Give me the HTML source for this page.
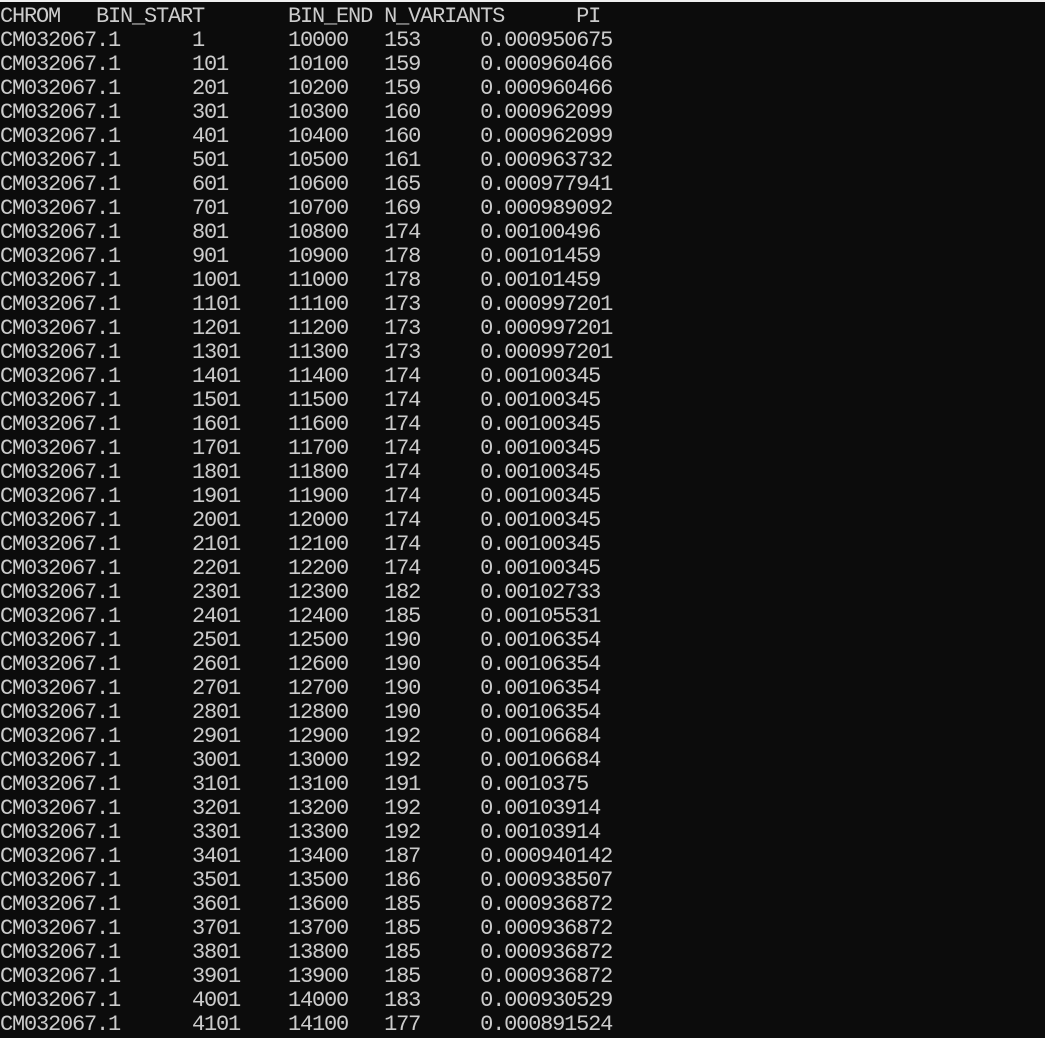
<!DOCTYPE html>
<html><head><meta charset="utf-8"><style>
html,body{margin:0;padding:0;background:#0c0c0c;width:1045px;height:1038px;overflow:hidden}
.top{height:2px;background:#f0f0f0}
pre{margin:0;padding:3px 0 0 0;font-family:"Liberation Mono",monospace;font-size:22px;letter-spacing:-1.2px;line-height:24px;color:#cccccc;white-space:pre}
</style></head><body><div class="top"></div><pre>CHROM   BIN_START       BIN_END N_VARIANTS      PI
CM032067.1      1       10000   153     0.000950675
CM032067.1      101     10100   159     0.000960466
CM032067.1      201     10200   159     0.000960466
CM032067.1      301     10300   160     0.000962099
CM032067.1      401     10400   160     0.000962099
CM032067.1      501     10500   161     0.000963732
CM032067.1      601     10600   165     0.000977941
CM032067.1      701     10700   169     0.000989092
CM032067.1      801     10800   174     0.00100496
CM032067.1      901     10900   178     0.00101459
CM032067.1      1001    11000   178     0.00101459
CM032067.1      1101    11100   173     0.000997201
CM032067.1      1201    11200   173     0.000997201
CM032067.1      1301    11300   173     0.000997201
CM032067.1      1401    11400   174     0.00100345
CM032067.1      1501    11500   174     0.00100345
CM032067.1      1601    11600   174     0.00100345
CM032067.1      1701    11700   174     0.00100345
CM032067.1      1801    11800   174     0.00100345
CM032067.1      1901    11900   174     0.00100345
CM032067.1      2001    12000   174     0.00100345
CM032067.1      2101    12100   174     0.00100345
CM032067.1      2201    12200   174     0.00100345
CM032067.1      2301    12300   182     0.00102733
CM032067.1      2401    12400   185     0.00105531
CM032067.1      2501    12500   190     0.00106354
CM032067.1      2601    12600   190     0.00106354
CM032067.1      2701    12700   190     0.00106354
CM032067.1      2801    12800   190     0.00106354
CM032067.1      2901    12900   192     0.00106684
CM032067.1      3001    13000   192     0.00106684
CM032067.1      3101    13100   191     0.0010375
CM032067.1      3201    13200   192     0.00103914
CM032067.1      3301    13300   192     0.00103914
CM032067.1      3401    13400   187     0.000940142
CM032067.1      3501    13500   186     0.000938507
CM032067.1      3601    13600   185     0.000936872
CM032067.1      3701    13700   185     0.000936872
CM032067.1      3801    13800   185     0.000936872
CM032067.1      3901    13900   185     0.000936872
CM032067.1      4001    14000   183     0.000930529
CM032067.1      4101    14100   177     0.000891524</pre></body></html>
